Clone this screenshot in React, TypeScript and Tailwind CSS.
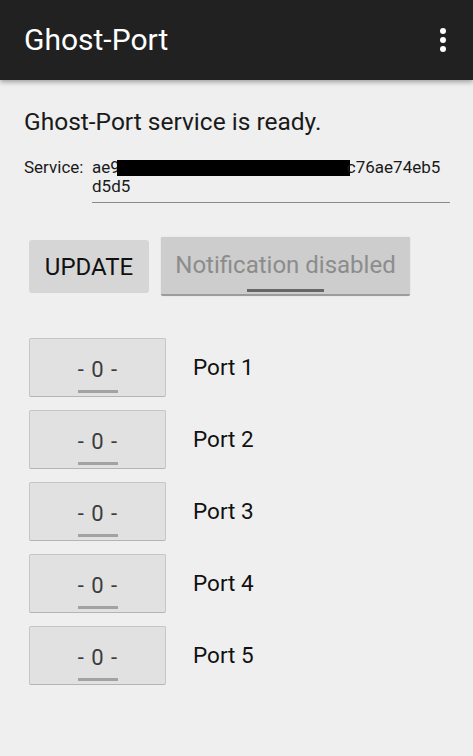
import React from 'react';

const ports = [1, 2, 3, 4, 5];

const PortRow: React.FC<{ n: number }> = ({ n }) => (
  <div className="flex items-center h-[59px]">
    <button className="relative ml-[5px] w-[137px] h-[59px] bg-[#e1e1e1] border border-[#c6c6c6] border-b-[#b4b4b4] rounded-[2px] flex items-center justify-center text-[22px] text-[#3c3c3c] pt-[4px]">
      <span className="whitespace-pre [word-spacing:2px]">- 0 -</span>
      <span className="absolute bottom-[3px] left-1/2 -translate-x-1/2 w-[40px] h-[3px] bg-[#a2a2a2]" />
    </button>
    <span className="ml-[27px] text-[22.5px] text-[#111]">Port {n}</span>
  </div>
);

export default function App() {
  return (
    <div className="min-h-screen bg-[#efefef] font-['Roboto',sans-serif]">
      {/* Action bar */}
      <header className="relative z-10 h-[80px] bg-[#212121] flex items-center justify-between pl-6 pr-[27px] shadow-[0_2px_5px_rgba(0,0,0,0.35)]">
        <h1 className="text-[30px] text-white -mt-[2px]">Ghost-Port</h1>
        <div className="flex flex-col gap-[3px]">
          <span className="w-[6px] h-[6px] rounded-full bg-white" />
          <span className="w-[6px] h-[6px] rounded-full bg-white" />
          <span className="w-[6px] h-[6px] rounded-full bg-white" />
        </div>
      </header>

      <main className="pt-[28px] px-6">
        <p className="text-[24.5px] leading-[28px] text-[#1a1a1a]">Ghost-Port service is ready.</p>

        {/* Service id */}
        <div className="mt-[22px] flex text-[17px] leading-[19px] text-[#1a1a1a]">
          <span className="w-[68px] shrink-0">Service:</span>
          <div className="flex-1 border-b border-[#8a8a8a] pb-[6px] -mr-[1px]">
            <div className="flex items-center">
              <span>ae9</span>
              <span className="inline-block w-[233px] h-[16px] bg-black -ml-[3px] -mr-[3px]" />
              <span>c76ae74eb5</span>
            </div>
            <div>d5d5</div>
          </div>
        </div>

        {/* Buttons */}
        <div className="mt-[34px] ml-[5px] flex items-center gap-[12px]">
          <button className="w-[120px] h-[53px] bg-[#d6d6d6] rounded-[3px] text-[24px] text-[#111]">UPDATE</button>
          <button className="relative w-[249px] h-[59px] bg-[#cdcdcd] rounded-[2px] border-b-2 border-[#9c9c9c] shadow-[0_0_1px_rgba(0,0,0,0.25)] text-[24px] text-[#8c8c8c] pb-[1px]">
            Notification disabled
            <span className="absolute bottom-[2px] left-[86px] w-[77px] h-[3px] bg-[#666]" />
          </button>
        </div>

        {/* Ports */}
        <div className="mt-[42px] flex flex-col gap-[13px]">
          {ports.map((n) => (
            <PortRow key={n} n={n} />
          ))}
        </div>
      </main>
    </div>
  );
}
